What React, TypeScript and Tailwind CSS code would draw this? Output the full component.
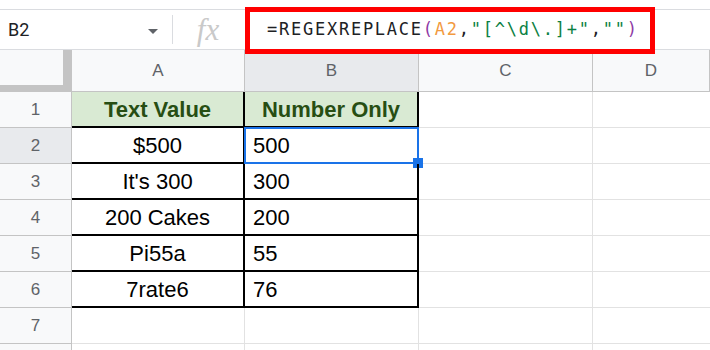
import React from "react";

const GRID = "grid grid-cols-[72px_173px_174px_174px_1fr]";

const rows = [
  { a: "Text Value", b: "Number Only", head: true },
  { a: "$500", b: "500" },
  { a: "It's 300", b: "300" },
  { a: "200 Cakes", b: "200" },
  { a: "Pi55a", b: "55" },
  { a: "7rate6", b: "76" },
];

function FormulaBar() {
  return (
    <div className="flex h-[41px] border-y border-[#dadce0] bg-white">
      {/* name box */}
      <div className="flex w-[172px] items-center justify-between pl-2 pr-[14px]">
        <span className="font-['Roboto',sans-serif] text-[18px] text-[#202124]">B2</span>
        <svg width="10" height="5" viewBox="0 0 10 5" className="mt-[3px]">
          <path d="M0 0 L10 0 L5 5 Z" fill="#5f6368" />
        </svg>
      </div>
      <div className="my-[5px] w-px bg-[#dadce0]" />
      <div className="flex w-[72px] items-center justify-center pr-[2px]">
        <span className="font-['Liberation_Serif',serif] text-[31px] italic leading-none text-[#c9c9c9]">fx</span>
      </div>
      <div className="relative flex flex-1 items-center pl-[22px]">
        <span className="font-['DejaVu_Sans_Mono',monospace] text-[17px] tracking-[1.75px] text-[#202124]">
          =REGEXREPLACE<span className="text-[#8e3aa5]">(</span>
          <span className="text-[#f29a3f]">A2</span>,
          <span className="text-[#0b8043]">"[^\d\.]+"</span>,
          <span className="text-[#0b8043]">""</span>
          <span className="text-[#8e3aa5]">)</span>
        </span>
        {/* annotation box */}
        <div className="absolute left-0 top-[-3px] z-10 h-[47px] w-[410px] border-[5px] border-[#ff0000]" />
      </div>
    </div>
  );
}

function ColHeaders() {
  const letters = ["A", "B", "C", "D"];
  return (
    <div className={`${GRID} h-[42px]`}>
      <div className="h-[42px] border-b-[7px] border-r-[9px] border-[#c4c4c4] bg-[#f8f9fa]" />
      {letters.map((l) => (
        <div
          key={l}
          className={`flex items-center justify-center border-b border-r border-[#c4c4c4] font-['Liberation_Sans',sans-serif] text-[17px] text-[#5f6368] ${
            l === "B" ? "bg-[#e8eaed]" : "bg-[#f8f9fa]"
          }`}
        >
          {l}
        </div>
      ))}
    </div>
  );
}

function RowHeader({ n, label = true }: { n: number; label?: boolean }) {
  return (
    <div
      className={`flex items-center justify-center border-b border-r border-[#c4c4c4] font-['Liberation_Sans',sans-serif] text-[17px] text-[#5f6368] ${
        n === 2 ? "bg-[#e8eaed]" : "bg-[#f8f9fa]"
      }`}
    >
      {label ? n : null}
    </div>
  );
}

export default function App() {
  return (
    <div className="h-[350px] w-[710px] overflow-hidden bg-white font-['Liberation_Sans',sans-serif]">
      <div className="h-[9px]" />
      <FormulaBar />
      <ColHeaders />

      {rows.map((r, i) => (
        <div key={i} className={`${GRID} h-[36px]`}>
          <RowHeader n={i + 1} />
          <div
            className={`flex items-center justify-center border-b-2 border-r-2 border-black text-[22px] ${
              r.head ? "bg-[#d9ead3] font-bold text-[#274e13]" : "text-black"
            }`}
          >
            {r.a}
          </div>
          <div
            className={`relative flex items-center border-b-2 border-r-2 border-black text-[22px] ${
              r.head ? "justify-center bg-[#d9ead3] font-bold text-[#274e13]" : "pl-[8px] text-black"
            }`}
          >
            {r.b}
            {i === 1 && (
              <>
                <div className="absolute left-[-1px] right-[-2px] top-[-1px] bottom-[-2px] border-2 border-[#1a73e8]" />
                <div className="absolute bottom-[-6px] right-[-6px] h-[10px] w-[10px] bg-[#1a73e8]" />
              </>
            )}
          </div>
          <div className="border-b border-r border-[#e2e2e2]" />
          <div className="border-b border-[#e2e2e2]" />
        </div>
      ))}

      {[7, 8].map((n) => (
        <div key={n} className={`${GRID} h-[36px]`}>
          <RowHeader n={n} label={n === 7} />
          <div className="border-b border-r border-[#e2e2e2]" />
          <div className="border-b border-r border-[#e2e2e2]" />
          <div className="border-b border-r border-[#e2e2e2]" />
          <div className="border-b border-[#e2e2e2]" />
        </div>
      ))}
    </div>
  );
}
